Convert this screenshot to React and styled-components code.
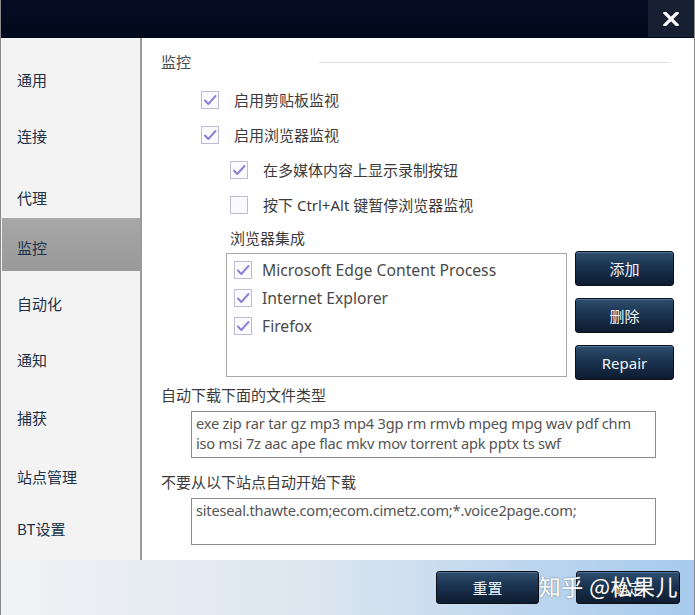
import React from 'react';
import styled, { createGlobalStyle } from 'styled-components';

const GlobalStyle = createGlobalStyle`
  html, body {
    margin: 0;
    padding: 0;
    background: #ffffff;
  }
  body {
    font-family: "Noto Sans", "Noto Sans CJK SC", sans-serif;
  }
`;

const Window = styled.div`
  position: relative;
  display: flex;
  flex-direction: column;
  width: 695px;
  height: 615px;
  overflow: hidden;
  box-sizing: border-box;
  border-left: 1px solid #8a8a8a;
  border-right: 1px solid #8a8a8a;
  background: #ffffff;
`;

const TitleBar = styled.div`
  display: flex;
  justify-content: flex-end;
  height: 38px;
  flex-shrink: 0;
  background: linear-gradient(#030c22, #010a1c);
`;

const CloseButton = styled.div`
  display: flex;
  align-items: center;
  justify-content: center;
  width: 46px;
  height: 37px;
  background: #172032;
`;

const Body = styled.div`
  display: flex;
  flex: 1;
  min-height: 0;
`;

const Sidebar = styled.ul`
  margin: 0;
  padding: 12px 0 0 1px;
  list-style: none;
  width: 138px;
  flex-shrink: 0;
  background: #f3f3f3;
  border-right: 2px solid #9a9a9a;
`;

const NavItem = styled.li`
  display: flex;
  align-items: center;
  box-sizing: border-box;
  height: ${p => p.h}px;
  padding-left: 15px;
  padding-top: ${p => Math.max(p.dy, 0)}px;
  padding-bottom: ${p => Math.max(-p.dy, 0)}px;
  font-family: "Noto Sans CJK SC", sans-serif;
  font-size: 15px;
  color: #1b3149;
  background: ${p => (p.active ? 'linear-gradient(#a7a7a7, #999999)' : 'transparent')};
`;

const Content = styled.div`
  flex: 1;
  padding: 12px 0 0 19px;
  font-family: "Noto Sans", "Noto Sans CJK SC", sans-serif;
  font-size: 15px;
  color: #3c3c3c;
`;

const GroupHead = styled.div`
  display: flex;
  align-items: center;
  height: 22px;
  color: #4a4a4a;

  span {
    font-family: "Noto Sans CJK SC", sans-serif;
  }

  hr {
    flex: 1;
    margin: 3px 24px 0 128px;
    border: none;
    border-top: 1px solid #e2e2e2;
  }
`;

const Options = styled.div`
  display: flex;
  flex-direction: column;
  padding-top: 10px;
`;

const CheckRow = styled.label`
  display: flex;
  align-items: center;
  height: 35px;
  padding-left: ${p => p.indent}px;
  gap: 15px;
  font-family: "Noto Sans", "Noto Sans CJK SC", sans-serif;
`;

const Box = styled.span`
  display: inline-flex;
  align-items: center;
  justify-content: center;
  width: 16px;
  height: 16px;
  flex-shrink: 0;
  border: 1px solid #bcbcd4;
  background: #fbfbff;
`;

const Check = ({ on }) => (
  <Box>
    {on && (
      <svg width="14" height="14" viewBox="0 0 14 14">
        <path d="M2 7.5 L5.3 11 L12.5 3" fill="none" stroke="#8d80d6" strokeWidth="2" strokeLinecap="round" strokeLinejoin="round" />
      </svg>
    )}
  </Box>
);

const SubLabel = styled.div`
  padding: 5px 0 0 69px;
  height: 22px;
  line-height: 22px;
  font-family: "Noto Sans CJK SC", sans-serif;
`;

const Integration = styled.div`
  display: flex;
  align-items: flex-start;
  gap: 8px;
  padding: 4px 0 0 65px;
`;

const ListBox = styled.div`
  display: flex;
  flex-direction: column;
  width: 339px;
  height: 120px;
  padding-top: 2px;
  box-sizing: content-box;
  border: 1px solid #a8a8a8;
`;

const ListItem = styled.div`
  display: flex;
  align-items: center;
  gap: 10px;
  height: 28px;
  padding-left: 7px;
  font-size: 15.7px;
  color: #4a4a4a;
`;

const ButtonColumn = styled.div`
  display: flex;
  flex-direction: column;
  gap: 12px;
  margin-top: -2px;
`;

const DarkButton = styled.div`
  display: flex;
  align-items: center;
  justify-content: center;
  width: ${p => p.w || 99}px;
  height: ${p => p.h || 35}px;
  box-sizing: border-box;
  border: 1px solid #0b0f16;
  border-radius: 3px;
  background: linear-gradient(#2f4f70 0%, #1a3350 45%, #0e1c30 100%);
  box-shadow: inset 0 1px 0 rgba(140, 180, 220, 0.35);
  color: #f2f6fa;
  font-family: "Noto Sans", "Noto Sans CJK SC", sans-serif;
  font-size: 15px;
`;

const FieldLabel = styled.div`
  height: 22px;
  line-height: 22px;
  padding-top: ${p => p.top}px;
  font-family: "Noto Sans CJK SC", sans-serif;
`;

const TextBox = styled.div`
  width: 456px;
  height: 39px;
  margin: 5px 0 0 30px;
  padding: 1px 3px 5px 4px;
  border: 1px solid #8c8c8c;
  font-size: 14.6px;
  line-height: 20px;
  color: #555555;
  letter-spacing: -0.2px;
`;

const BottomBar = styled.div`
  display: flex;
  align-items: center;
  justify-content: flex-end;
  gap: 37px;
  height: 55px;
  flex-shrink: 0;
  padding-right: 14px;
  background: linear-gradient(90deg, #f1f2f4 0%, #dce6f0 45%, #a6caed 100%);
`;

const Watermark = styled.div`
  position: absolute;
  right: 16px;
  bottom: 14px;
  font-family: "Noto Sans CJK SC", sans-serif;
  font-size: 22px;
  color: #ffffff;
  text-shadow: 0 0 2px rgba(60, 60, 60, 0.6);
  letter-spacing: 0.5px;
`;

const navItems = [
  { label: '通用', h: 58, dy: 0 },
  { label: '连接', h: 58, dy: -4 },
  { label: '代理', h: 52, dy: 10 },
  { label: '监控', h: 53, dy: 5, active: true },
  { label: '自动化', h: 60, dy: 4 },
  { label: '通知', h: 57, dy: 0 },
  { label: '捕获', h: 58, dy: 0 },
  { label: '站点管理', h: 56, dy: 4 },
  { label: 'BT设置', h: 52, dy: 0 }
];

const browsers = ['Microsoft Edge Content Process', 'Internet Explorer', 'Firefox'];

const App = () => (
  <>
    <GlobalStyle />
    <Window>
      <TitleBar>
        <CloseButton>
          <svg width="16" height="14" viewBox="0 0 16 14">
            <path d="M2 1 L14 13 M14 1 L2 13" stroke="#ffffff" strokeWidth="3.2" strokeLinecap="square" />
          </svg>
        </CloseButton>
      </TitleBar>
      <Body>
        <Sidebar>
          {navItems.map(item => (
            <NavItem key={item.label} h={item.h} dy={item.dy} active={item.active}>
              {item.label}
            </NavItem>
          ))}
        </Sidebar>
        <Content>
          <GroupHead>
            <span>监控</span>
            <hr />
          </GroupHead>
          <Options>
            <CheckRow indent={40}>
              <Check on />
              启用剪贴板监视
            </CheckRow>
            <CheckRow indent={40}>
              <Check on />
              启用浏览器监视
            </CheckRow>
            <CheckRow indent={69}>
              <Check on />
              在多媒体内容上显示录制按钮
            </CheckRow>
            <CheckRow indent={69}>
              <Check />
              按下 Ctrl+Alt 键暂停浏览器监视
            </CheckRow>
          </Options>
          <SubLabel>浏览器集成</SubLabel>
          <Integration>
            <ListBox>
              {browsers.map(b => (
                <ListItem key={b}>
                  <Check on />
                  {b}
                </ListItem>
              ))}
            </ListBox>
            <ButtonColumn>
              <DarkButton>添加</DarkButton>
              <DarkButton>删除</DarkButton>
              <DarkButton>Repair</DarkButton>
            </ButtonColumn>
          </Integration>
          <FieldLabel top={4}>自动下载下面的文件类型</FieldLabel>
          <TextBox>
            exe zip rar tar gz mp3 mp4 3gp rm rmvb mpeg mpg wav pdf chm iso msi 7z aac ape flac mkv mov torrent apk pptx ts swf
          </TextBox>
          <FieldLabel top={13}>不要从以下站点自动开始下载</FieldLabel>
          <TextBox>siteseal.thawte.com;ecom.cimetz.com;*.voice2page.com;</TextBox>
        </Content>
      </Body>
      <BottomBar>
        <DarkButton w={103} h={33}>重置</DarkButton>
        <DarkButton w={104} h={33}>确定</DarkButton>
      </BottomBar>
      <Watermark>知乎 @松果儿</Watermark>
    </Window>
  </>
);

export default App;
